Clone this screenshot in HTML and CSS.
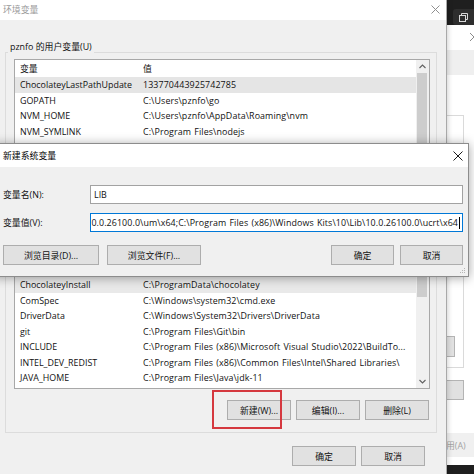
FILE: index.html
```html
<!DOCTYPE html>
<html lang="zh-CN">
<head>
<meta charset="utf-8">
<title>环境变量</title>
<link rel="stylesheet" href="styles.css">
</head>
<body>
<div class="desktop">

  <div class="bgapp">
    <div class="bg-top">
      <div class="bg-restore">
        <svg width="9" height="9" viewBox="0 0 9 9"><rect x="0.5" y="2.5" width="6" height="6" fill="none" stroke="#d8d8d8"/><path d="M2.5 2.5V0.5H8.5V6.5H6.5" fill="none" stroke="#d8d8d8"/></svg>
      </div>
    </div>
    <div class="bg-white1">
      <svg class="bg-x" width="10" height="10" viewBox="0 0 10 10"><path d="M1 1L9 9M9 1L1 9" stroke="#8a8a8a" stroke-width="1"/></svg>
    </div>
    <div class="bg-band"></div>
    <div class="bg-gap"></div>
    <div class="bg-box"><div class="bg-btn1"></div></div>
    <div class="bg-btn2"></div>
    <div class="bg-foot"><span>用(A)</span></div>
    <div class="bg-dark"></div>
  </div>

  <div class="win main">
    <div class="main-title">
      <span>环境变量</span>
      <svg class="close" width="9" height="9" viewBox="0 0 9 9"><path d="M0.5 0.5L8.5 8.5M8.5 0.5L0.5 8.5" stroke="#8f8f8f" stroke-width="1"/></svg>
    </div>

    <div class="group group-user">
      <div class="group-label">pznfo 的用户变量(U)</div>
      <div class="list list-user">
        <div class="list-rows list-rows-user">
          <div class="list-head"><div class="cell">变量</div><div class="cell">值</div></div>
          <div class="row sel"><div class="cell">ChocolateyLastPathUpdate</div><div class="cell val">133770443925742785</div></div>
          <div class="row"><div class="cell">GOPATH</div><div class="cell val">C:\Users\pznfo\go</div></div>
          <div class="row"><div class="cell">NVM_HOME</div><div class="cell val">C:\Users\pznfo\AppData\Roaming\nvm</div></div>
          <div class="row"><div class="cell">NVM_SYMLINK</div><div class="cell val">C:\Program Files\nodejs</div></div>
          <div class="row"><div class="cell">OneDrive</div><div class="cell val">C:\Users\pznfo\OneDrive</div></div>
        </div>
        <div class="scrollbar">
          <div class="sb-arrow"><svg width="7" height="5" viewBox="0 0 7 5"><polyline points="0.5,4 3.5,1 6.5,4" fill="none" stroke="#606060" stroke-width="1.1"/></svg></div>
          <div class="sb-thumb sb-thumb-user"></div>
        </div>
      </div>
    </div>

    <div class="group group-sys">
      <div class="list list-sys">
        <div class="list-rows">
          <div class="list-head"><div class="cell"></div><div class="cell"></div></div>
          <div class="row sel2"><div class="cell">ChocolateyInstall</div><div class="cell val">C:\ProgramData\chocolatey</div></div>
          <div class="row"><div class="cell">ComSpec</div><div class="cell val">C:\Windows\system32\cmd.exe</div></div>
          <div class="row"><div class="cell">DriverData</div><div class="cell val">C:\Windows\System32\Drivers\DriverData</div></div>
          <div class="row"><div class="cell">git</div><div class="cell val">C:\Program Files\Git\bin</div></div>
          <div class="row"><div class="cell">INCLUDE</div><div class="cell val">C:\Program Files (x86)\Microsoft Visual Studio\2022\BuildTo...</div></div>
          <div class="row"><div class="cell">INTEL_DEV_REDIST</div><div class="cell val">C:\Program Files (x86)\Common Files\Intel\Shared Libraries\</div></div>
          <div class="row"><div class="cell">JAVA_HOME</div><div class="cell val">C:\Program Files\Java\jdk-11</div></div>
        </div>
        <div class="scrollbar">
          <div class="sb-arrow"><svg width="7" height="5" viewBox="0 0 7 5"><polyline points="0.5,4 3.5,1 6.5,4" fill="none" stroke="#606060" stroke-width="1.1"/></svg></div>
          <div class="sb-thumb sb-thumb-sys"></div>
          <div class="sb-track"></div>
          <div class="sb-arrow"><svg width="7" height="5" viewBox="0 0 7 5"><polyline points="0.5,1 3.5,4 6.5,1" fill="none" stroke="#606060" stroke-width="1.1"/></svg></div>
        </div>
      </div>
      <div class="btn-row">
        <button class="btn">新建(W)...</button>
        <button class="btn">编辑(I)...</button>
        <button class="btn">删除(L)</button>
      </div>
    </div>

    <div class="main-foot">
      <button class="btn">确定</button>
      <button class="btn">取消</button>
    </div>

    <div class="mark"></div>
  </div>

  <div class="win dialog">
    <div class="dlg-title">
      <span>新建系统变量</span>
      <svg class="close" width="10" height="10" viewBox="0 0 10 10"><path d="M0.5 0.5L9.5 9.5M9.5 0.5L0.5 9.5" stroke="#1a1a1a" stroke-width="1"/></svg>
    </div>
    <div class="dlg-body">
      <div class="field">
        <label class="field-label">变量名(N):</label>
        <div class="input"><span class="input-text">LIB</span></div>
      </div>
      <div class="field">
        <label class="field-label">变量值(V):</label>
        <div class="input input-focus"><span class="input-text val">0.0.26100.0\um\x64;C:\Program Files (x86)\Windows Kits\10\Lib\10.0.26100.0\ucrt\x64</span><span class="caret"></span></div>
      </div>
      <div class="dlg-buttons">
        <div class="btn-group">
          <button class="btn btn-browse1">浏览目录(D)...</button>
          <button class="btn btn-browse2">浏览文件(F)...</button>
        </div>
        <div class="btn-group btn-group-right">
          <button class="btn btn-dlg">确定</button>
          <button class="btn btn-dlg">取消</button>
        </div>
      </div>
    </div>
    <svg class="grip" width="6" height="6" viewBox="0 0 6 6"><rect x="4" y="0" width="1" height="1" fill="#b5b5b5"/><rect x="2" y="2" width="1" height="1" fill="#b5b5b5"/><rect x="4" y="2" width="1" height="1" fill="#b5b5b5"/><rect x="0" y="4" width="1" height="1" fill="#b5b5b5"/><rect x="2" y="4" width="1" height="1" fill="#b5b5b5"/><rect x="4" y="4" width="1" height="1" fill="#b5b5b5"/></svg>
  </div>

</div>
</body>
</html>
```

FILE: styles.css
```css
* { box-sizing: border-box; }
html, body { margin: 0; padding: 0; }
body {
  width: 474px;
  height: 474px;
  overflow: hidden;
  background: #ffffff;
  font-family: "Open Sans", "Noto Sans CJK SC", sans-serif;
  font-size: 8.9px;
  color: #111;
}
.desktop { position: relative; width: 474px; height: 474px; overflow: hidden; }

/* background application on the right */
.bgapp {
  position: absolute;
  left: 447px;
  top: 0;
  width: 27px;
  height: 474px;
  display: flex;
  flex-direction: column;
  background: #fff;
}
.bg-top { height: 25px; background: #1f1f1f; padding: 9px 0 0 6px; }
.bg-restore {
  width: 21px; height: 16px; background: #2e2e2e; border-radius: 3px 0 0 3px;
  display: flex; align-items: center; justify-content: center;
}
.bg-white1 { height: 25px; background: #fff; position: relative; }
.bg-x { margin: 7px 0 0 22px; display: block; }
.bg-band { height: 25px; background: #efefef; }
.bg-gap { height: 40px; }
.bg-box {
  height: 253px; width: 17px;
  border: 1px solid #dadada; border-left: none;
  display: flex; flex-direction: column;
}
.bg-btn1 { margin-top: 220px; height: 21px; width: 8px; background: #e1e1e1; border: 1px solid #b4b4b4; border-left: none; }
.bg-btn2 { margin-top: 12px; height: 20px; width: 17px; background: #e1e1e1; border: 1px solid #b4b4b4; border-left: none; }
.bg-foot {
  margin-top: 33px; height: 24px; background: #f0f0f0;
  display: flex; align-items: center; color: #a3a3a3; white-space: nowrap;
}
.bg-foot span { margin-left: -1px; }
.bg-dark { margin-top: 8px; flex: 1; background: #1f1f1f; }

/* windows */
.win { position: absolute; }
.main {
  left: 0; top: 0; width: 447px; height: 480px;
  background: #f0f0f0;
  border-right: 1px solid #a9a9a9;
  box-shadow: 1px 0 5px rgba(0,0,0,0.18);
  display: flex; flex-direction: column;
}
.main-title {
  height: 20px; flex: none; background: #fff;
  display: flex; align-items: center; justify-content: space-between;
  padding: 0 6px 2px 3px; color: #9a9a9a;
}

.group {
  margin-left: 5px; width: 432px;
  border: 1px solid #dcdcdc;
  padding: 0 6px 8px 8px;
  display: flex; flex-direction: column; flex: none;
}
.group-user { margin-top: 32px; padding-bottom: 36px; }
.group-sys { margin-top: 18px; padding-bottom: 12px; }
.group-label {
  margin-top: -12px; margin-left: -6px; height: 12px; line-height: 12px;
  align-self: flex-start; padding: 0 2px; background: #f0f0f0; white-space: nowrap;
}
.list {
  border: 1px solid #a8a8a8; background: #fff;
  display: flex; overflow: hidden; flex: none;
}
.list-user { margin-top: 6px; height: 140px; align-items: flex-start; }
.list-sys { margin-top: 4px; height: 130px; }
.list-rows { flex: 1; min-width: 0; overflow: hidden; }
.list-rows-user { height: 84px; }
.list-user .scrollbar { align-self: stretch; }
.list-head, .row {
  display: grid; grid-template-columns: 128px 1fr;
  white-space: nowrap;
}
.list-head { height: 17px; line-height: 17px; }
.row { height: 15.5px; line-height: 15.5px; }
.cell { overflow: hidden; }
.cell:first-child { padding-left: 5px; }
.val { letter-spacing: 0.1px; word-spacing: 0.8px; }
.row.sel { background: #e5e5e5; }
.row.sel2 { background: #e9e9e9; }

.scrollbar { width: 13px; flex: none; background: #f0f0f0; display: flex; flex-direction: column; }
.sb-arrow { height: 13px; flex: none; display: flex; align-items: center; justify-content: center; }
.sb-thumb { margin: 0 2px 0 1px; background: #cdcdcd; flex: none; }
.sb-thumb-user { height: 100px; }
.sb-thumb-sys { height: 24px; }
.sb-track { flex: 1; }

.btn-row { display: flex; justify-content: flex-end; gap: 5px; margin-top: 11px; margin-right: 1px; }
.btn {
  height: 20px; width: 64px; padding: 0;
  background: #e1e1e1; border: 1px solid #adadad; border-radius: 0;
  font: inherit; color: #111;
  display: flex; align-items: center; justify-content: center; white-space: nowrap;
}
.main-foot { display: flex; justify-content: flex-end; gap: 5px; margin-top: 13px; padding-right: 21px; flex: none; }

.mark {
  position: absolute; left: 212px; top: 390px; width: 70px; height: 39px;
  border: 2px solid #d5383f;
}

/* dialog */
.dialog {
  left: -8px; top: 143px; width: 477px; height: 134px;
  background: #f0f0f0;
  border: 1px solid #8c8c8c;
  box-shadow: 0 1px 10px rgba(0,0,0,0.35);
  display: flex; flex-direction: column;
}
.dlg-title {
  height: 23px; flex: none; background: #fff;
  display: flex; align-items: center; justify-content: space-between;
  padding: 0 5px 0 10px; color: #000;
}
.dlg-body { padding: 18px 5px 11px 10px; display: flex; flex-direction: column; }
.field { display: flex; align-items: center; height: 19px; }
.field + .field { margin-top: 9px; }
.field-label { width: 87px; flex: none; white-space: nowrap; }
.input {
  flex: 1; min-width: 0; height: 19px;
  background: #fff; border: 1px solid #a2a2a2;
  display: flex; align-items: center; overflow: hidden;
  padding: 0 3px; white-space: nowrap;
}
.input-focus { border-color: #0078d7; justify-content: flex-end; padding-right: 2px; }
.input-text { flex: none; }
.caret { flex: none; width: 1px; height: 12px; background: #000; margin-left: 1px; }
.dlg-buttons { display: flex; justify-content: space-between; margin-top: 13px; }
.btn-group { display: flex; gap: 8px; }
.btn-group-right { gap: 6px; }
.btn-browse1 { width: 96px; }
.btn-browse2 { width: 94px; }
.btn-dlg { width: 63px; }
.grip { position: absolute; right: 2px; bottom: 2px; }
```
